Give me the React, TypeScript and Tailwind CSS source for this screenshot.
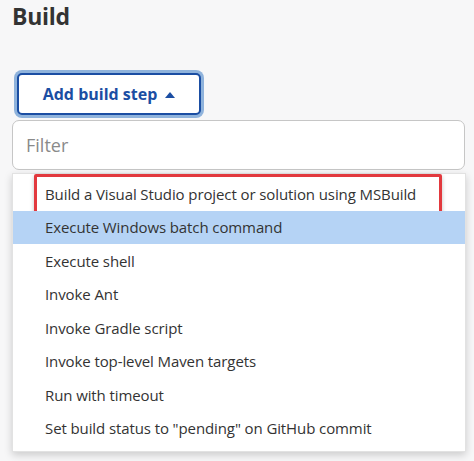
import React from 'react';

const items = [
  'Build a Visual Studio project or solution using MSBuild',
  'Execute Windows batch command',
  'Execute shell',
  'Invoke Ant',
  'Invoke Gradle script',
  'Invoke top-level Maven targets',
  'Run with timeout',
  'Set build status to "pending" on GitHub commit',
];

const App: React.FC = () => {
  return (
    <div
      className="w-[474px] h-[461px] bg-[#f7f7f8] overflow-hidden text-[#333]"
      style={{ fontFamily: '"Open Sans", "Noto Sans", sans-serif' }}
    >
      <div className="pl-[12px] pt-[1px]">
        <h2 className="text-[23px] font-bold leading-[30px] text-[#333] tracking-[-0.3px]">Build</h2>
      </div>

      <div className="pl-[14px] pt-[39px]">
        <div className="w-[190px] h-[48px] rounded-[8px] bg-[#8fb3dc] p-[3px]">
          <button className="w-full h-full rounded-[5px] border-2 border-[#1b4ea3] bg-white flex items-center justify-center gap-[8px] text-[#1b4ea3] text-[16px] font-bold">
            <span>Add build step</span>
            <svg width="10" height="7" viewBox="0 0 10 7">
              <path d="M0 7 L5 1 L10 7 Z" fill="#1b4ea3" />
            </svg>
          </button>
        </div>
      </div>

      <div className="ml-[12px] mt-[2px] w-[453px] h-[50px] rounded-[7px] border border-[#c6c6c6] bg-white flex items-center pl-[13px]">
        <span className="text-[18px] text-[#8a8a8a]">Filter</span>
      </div>

      <div className="ml-[12px] mt-[3px] w-[454px] bg-white border border-[#e2e2e2] shadow-[0_3px_8px_rgba(0,0,0,0.18)] pt-[3px] pb-[6px]">
        {items.map((item, i) => (
          <div
            key={item}
            className={
              'relative h-[33.5px] flex items-center pl-[32px] text-[15px] text-[#333] ' +
              (i === 1 ? 'bg-[#b5d3f5]' : '')
            }
          >
            {i === 0 && (
              <div className="absolute left-[21px] top-[-3px] w-[408px] h-[40px] border-[3px] border-[#e2393e] rounded-[2px] shadow-[0_2px_4px_rgba(0,0,0,0.25)]" />
            )}
            <span className="relative tracking-[-0.1px]">{item}</span>
          </div>
        ))}
      </div>
    </div>
  );
};

export default App;
